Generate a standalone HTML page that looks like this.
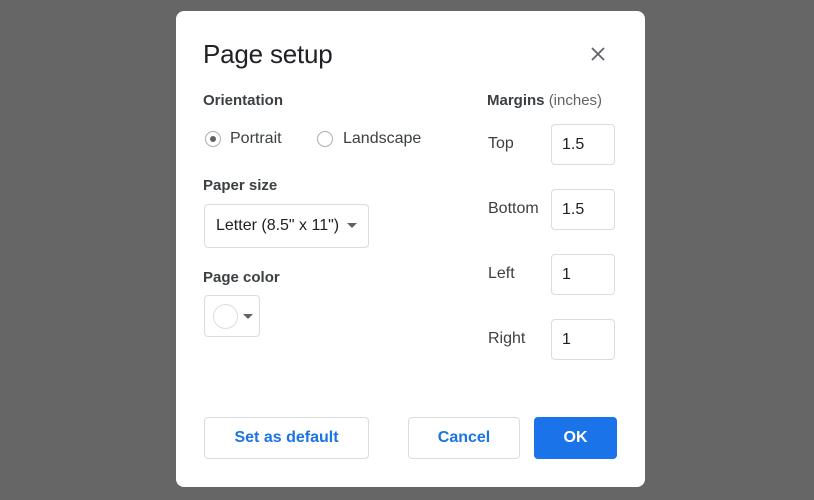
<!DOCTYPE html>
<html><head><style>
body{margin:0;width:814px;height:500px;background:#666;position:relative;overflow:hidden;font-family:"Liberation Sans",Arial,sans-serif;color:#202124}
.d{position:absolute;left:176px;top:11px;width:469px;height:476px;background:#fff;border-radius:8px}
.a{position:absolute;white-space:nowrap}
.t{font-size:26px;color:#202124}
.h{font-size:15px;font-weight:bold;color:#3c4043}
.l{font-size:16px;color:#3c4043}
.box{position:absolute;border:1px solid #dadce0;border-radius:4px;background:#fff;box-sizing:border-box}
.in{font-size:16px;color:#202124;padding:11px 0 0 10px}
.btn{position:absolute;border-radius:4px;box-sizing:border-box;font-size:16px;font-weight:bold;text-align:center;line-height:42px}
.r{position:absolute;width:16px;height:16px;border:1px solid #aaa;border-radius:50%;box-sizing:border-box}
.tri{position:absolute;width:0;height:0;border-left:5px solid transparent;border-right:5px solid transparent;border-top:5px solid #5f6368}
</style></head><body>
<div class="d">
<div class="a t" style="left:27px;top:28px;letter-spacing:-0.2px">Page setup</div>
<svg class="a" style="left:415px;top:36px" width="14" height="14"><path d="M1 1L13 13M13 1L1 13" stroke="#5f6368" stroke-width="1.8"/></svg>
<div class="a h" style="left:27px;top:81px">Orientation</div>
<div class="r" style="left:29px;top:120px"></div><div class="a" style="left:34px;top:125px;width:6px;height:6px;border-radius:50%;background:#5f6368"></div>
<div class="a l" style="left:54px;top:119px">Portrait</div>
<div class="r" style="left:141px;top:120px"></div>
<div class="a l" style="left:167px;top:119px">Landscape</div>
<div class="a h" style="left:27px;top:166px">Paper size</div>
<div class="box" style="left:28px;top:193px;width:165px;height:44px"><div class="in" style="padding-left:11px;padding-top:12px">Letter (8.5" x 11")</div></div>
<div class="tri" style="left:171px;top:212px"></div>
<div class="a h" style="left:27px;top:258px">Page color</div>
<div class="box" style="left:28px;top:284px;width:56px;height:42px"></div>
<div class="r" style="left:37px;top:293px;width:25px;height:25px;border-color:#dadce0"></div>
<div class="tri" style="left:67px;top:303px"></div>
<div class="a h" style="left:311px;top:81px">Margins <span style="font-weight:normal;color:#5f6368">(inches)</span></div>
<div class="a l" style="left:312px;top:124px">Top</div>
<div class="box" style="left:375px;top:113px;width:64px;height:41px"><div class="in">1.5</div></div>
<div class="a l" style="left:312px;top:189px">Bottom</div>
<div class="box" style="left:375px;top:178px;width:64px;height:41px"><div class="in">1.5</div></div>
<div class="a l" style="left:312px;top:254px">Left</div>
<div class="box" style="left:375px;top:243px;width:64px;height:41px"><div class="in">1</div></div>
<div class="a l" style="left:312px;top:319px">Right</div>
<div class="box" style="left:375px;top:308px;width:64px;height:41px"><div class="in">1</div></div>
<div class="btn" style="left:28px;top:406px;width:165px;height:42px;border:1px solid #dadce0;color:#1a73e8;line-height:40px">Set as default</div>
<div class="btn" style="left:232px;top:406px;width:112px;height:42px;border:1px solid #dadce0;color:#1a73e8;line-height:40px">Cancel</div>
<div class="btn" style="left:358px;top:406px;width:83px;height:42px;background:#1a73e8;color:#fff">OK</div>
</div>
</body></html>
